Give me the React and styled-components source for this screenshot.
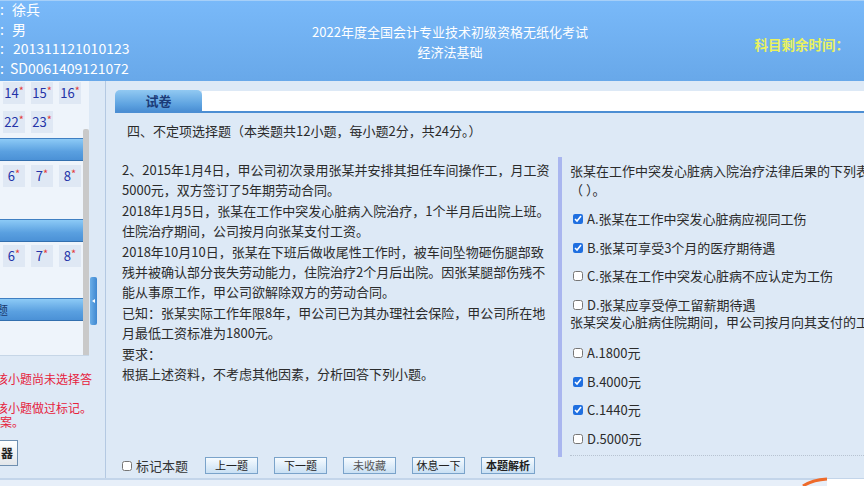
import React from 'react';
import styled, { createGlobalStyle } from 'styled-components';

// Global page reset
const GlobalStyle = createGlobalStyle`
  html, body { margin: 0; padding: 0; }
  body {
    font-family: "Noto Sans CJK SC", "Noto Sans", sans-serif;
    background: #dde9f6;
    overflow: hidden;
  }
  * { box-sizing: border-box; }
`;

const Page = styled.div`
  width: 864px;
  height: 486px;
  display: flex;
  flex-direction: column;
  overflow: hidden;
  position: relative;
`;

/* ---------- header ---------- */
const Header = styled.header`
  height: 81px;
  flex: none;
  display: flex;
  background: linear-gradient(#79b9f9, #68a8e9);
  border-top: 1px solid #a6cff8;
  color: #fff;
`;

const Info = styled.div`
  width: 148px;
  flex: none;
  font-size: 14px;
  line-height: 19.7px;
  margin-top: -1px;
`;

const InfoRow = styled.div`
  display: flex;
  gap: ${p => p.gap}px;
  white-space: nowrap;
`;

const Title = styled.div`
  flex: 1;
  text-align: center;
  font-size: 13px;
  line-height: 20px;
  padding-top: 21px;
`;

const Timer = styled.div`
  width: 112px;
  flex: none;
  display: flex;
  justify-content: flex-end;
  padding: 33px 15px 0 0;
  font-size: 13.5px;
  font-weight: bold;
  color: #eaf25e;
  white-space: nowrap;
`;

/* ---------- body ---------- */
const Body = styled.div`
  height: 399px;
  flex: none;
  display: flex;
  background: #dde9f6;
  border-bottom: 2px solid #c3d5ea;
`;

const Footer = styled.div`
  flex: 1;
  background: #e7eff9;
`;

/* ---------- sidebar ---------- */
const Sidebar = styled.aside`
  width: 106px;
  flex: none;
  border-right: 1px solid #b4c9e2;
  display: flex;
  flex-direction: column;
  overflow: hidden;
`;

const PanelRow = styled.div`
  height: 275px;
  flex: none;
  display: flex;
`;

const Panel = styled.div`
  width: 83px;
  flex: none;
  background: #eef4fb;
  border-bottom: 1px solid #c6d6e7;
  padding-top: 1px;
  overflow: hidden;
`;

const Track = styled.div`
  width: 6px;
  flex: none;
  background: #eef4fb;
  border-bottom: 1px solid #c6d6e7;
  padding-top: 48px;
  display: flex;
`;

const Thumb = styled.div`
  flex: 1;
  background: #c9c9c9;
  border-radius: 2px 2px 0 0;
`;

const Gutter = styled.div`
  flex: 1;
  padding: 196px 0 0 1px;
`;

const Handle = styled.div`
  width: 7px;
  height: 48px;
  border-radius: 2px;
  background: linear-gradient(90deg, #6aaee8, #3f87d0);
  display: flex;
  align-items: center;
  justify-content: center;
  &::after {
    content: '';
    border-style: solid;
    border-width: 2px 3px 2px 0;
    border-color: transparent #fff transparent transparent;
  }
`;

const NumGrid = styled.div`
  display: grid;
  grid-template-columns: repeat(3, 22px);
  column-gap: 6px;
  row-gap: 7px;
  padding-left: 3px;
  margin-top: ${p => p.top || 0}px;
`;

const Num = styled.div`
  height: 22px;
  background: #dfe8f4;
  color: #2433a8;
  font-size: 13px;
  line-height: 22px;
  text-align: center;
  white-space: nowrap;
  sup {
    color: #e23c3c;
    font-size: 11px;
    vertical-align: 3px;
    line-height: 0;
  }
`;

const Bar = styled.div`
  height: 23px;
  margin-top: ${p => p.top}px;
  background: linear-gradient(#8ccaf6, #5aa0e0 60%, #4b91d6);
  border-top: 1px solid #3f7fc2;
  border-bottom: 1px solid #326fae;
  color: #1b3a6e;
  font-size: 12px;
  line-height: 21px;
  text-indent: -4px;
  white-space: nowrap;
`;

const Note = styled.div`
  color: #e6223d;
  font-size: 12px;
  line-height: 14px;
  white-space: nowrap;
  margin: ${p => p.top}px 0 0 ${p => p.left || 0}px;
`;

const CalcButton = styled.div`
  width: 18px;
  height: 26px;
  margin-top: 11px;
  background: linear-gradient(#ffffff, #e2e6ea);
  border: 1px solid #6f8fb0;
  border-left: none;
  font-size: 12px;
  font-weight: bold;
  line-height: 24px;
  color: #222;
  text-indent: 1px;
`;

/* ---------- main area ---------- */
const Main = styled.main`
  flex: 1;
  min-width: 0;
  display: flex;
  flex-direction: column;
  padding: 9px 0 0 9px;
  overflow: hidden;
`;

const TabStrip = styled.div`
  height: 23px;
  flex: none;
  display: flex;
  border-bottom: 2px solid #4c8ed3;
`;

const Tab = styled.div`
  width: 87px;
  height: 21px;
  border-radius: 5px 5px 0 0;
  background: linear-gradient(#91c9f2, #5da2e0 70%, #4b8fd4);
  color: #1b3b78;
  font-size: 13px;
  font-weight: bold;
  line-height: 21px;
  text-align: center;
`;

const TabFill = styled.div`
  flex: 1;
  margin-top: 1px;
  background: #fff;
`;

const SectionTitle = styled.div`
  margin-top: 9px;
  padding-left: 12px;
  font-size: 13px;
  line-height: 18px;
  color: #2b2b2b;
  white-space: nowrap;
`;

const Content = styled.div`
  margin-top: 17px;
  height: 300px;
  flex: none;
  display: flex;
`;

const Material = styled.div`
  width: 443px;
  flex: none;
  padding: 3px 0 0 7px;
  font-size: 13px;
  line-height: 20.4px;
  color: #2b2b2b;
  white-space: nowrap;
`;

const Questions = styled.div`
  flex: 1;
  min-width: 0;
  border-left: 4px solid #a9b6ef;
  padding: 3.5px 0 0 8px;
  overflow: hidden;
  white-space: nowrap;
  font-size: 13px;
  color: #2b2b2b;
`;

const Stem = styled.div`
  line-height: ${p => p.lh}px;
  margin-top: ${p => p.top || 0}px;
`;

const Option = styled.label`
  display: flex;
  align-items: center;
  height: 16px;
  margin-top: ${p => p.top}px;
  padding-left: 3px;
  line-height: 16px;
`;

const Check = styled.input.attrs({ type: 'checkbox' })`
  width: 10px;
  height: 10px;
  margin: 0 4px 0 0;
  accent-color: #1f6fe0;
`;

const Ghost = styled.div`
  margin-top: 8px;
  width: 300px;
  border-top: 1px dotted #b7c3d1;
`;

const Toolbar = styled.div`
  height: 17px;
  flex: none;
  display: flex;
  align-items: center;
  padding-left: 7px;
`;

const MarkLabel = styled.label`
  display: flex;
  align-items: center;
  font-size: 13px;
  color: #333;
  margin-right: 17px;
`;

const ToolButton = styled.button`
  width: ${p => (p.wide ? 54 : 53)}px;
  height: 17px;
  margin-right: 16px;
  padding: 0;
  border: 1px solid #7aa3ca;
  background: linear-gradient(#f6fbff, #c9e0f4);
  font-family: inherit;
  font-size: 11px;
  font-weight: ${p => (p.bold ? 'bold' : 'normal')};
  color: ${p => (p.muted ? '#555' : '#222')};
  line-height: 15px;
`;

const Corner = styled.svg`
  position: absolute;
  left: 800px;
  top: 477px;
`;

const numbers1 = [14, 15, 16, 22, 23];
const material = [
  '2、2015年1月4日，甲公司初次录用张某并安排其担任车间操作工，月工资',
  '5000元，双方签订了5年期劳动合同。',
  '2018年1月5日，张某在工作中突发心脏病入院治疗，1个半月后出院上班。',
  '住院治疗期间，公司按月向张某支付工资。',
  '2018年10月10日，张某在下班后做收尾性工作时，被车间坠物砸伤腿部致',
  '残并被确认部分丧失劳动能力，住院治疗2个月后出院。因张某腿部伤残不',
  '能从事原工作，甲公司欲解除双方的劳动合同。',
  '已知：张某实际工作年限8年，甲公司已为其办理社会保险，甲公司所在地',
  '月最低工资标准为1800元。',
  '要求：',
  '根据上述资料，不考虑其他因素，分析回答下列小题。',
];

const q1 = [
  ['A.张某在工作中突发心脏病应视同工伤', true],
  ['B.张某可享受3个月的医疗期待遇', true],
  ['C.张某在工作中突发心脏病不应认定为工伤', false],
  ['D.张某应享受停工留薪期待遇', false],
];
const q2 = [
  ['A.1800元', false],
  ['B.4000元', true],
  ['C.1440元', true],
  ['D.5000元', false],
];

const NumRow = ({ items, top }) => (
  <NumGrid top={top}>
    {items.map(n => (
      <Num key={n}>{n}<sup>*</sup></Num>
    ))}
  </NumGrid>
);

const App = () => (
  <Page>
    <GlobalStyle />
    <Header>
      <Info>
        <InfoRow gap={8}><span>:</span><span>徐兵</span></InfoRow>
        <InfoRow gap={8}><span>:</span><span>男</span></InfoRow>
        <InfoRow gap={9}><span>:</span><span>201311121010123</span></InfoRow>
        <InfoRow gap={6}><span>:</span><span>SD0061409121072</span></InfoRow>
      </Info>
      <Title>
        <div>2022年度全国会计专业技术初级资格无纸化考试</div>
        <div>经济法基础</div>
      </Title>
      <Timer>科目剩余时间：</Timer>
    </Header>

    <Body>
      <Sidebar>
        <PanelRow>
          <Panel>
            <NumRow items={numbers1} />
            <Bar top={5} />
            <NumRow items={[6, 7, 8]} top={4} />
            <Bar top={32} />
            <NumRow items={[6, 7, 8]} top={3} />
            <Bar top={31}>题</Bar>
          </Panel>
          <Track><Thumb /></Track>
          <Gutter><Handle /></Gutter>
        </PanelRow>
        <Note top={16} left={-4}>该小题尚未选择答</Note>
        <Note top={15} left={-4}>该小题做过标记。</Note>
        <Note top={0}>案。</Note>
        <CalcButton>器</CalcButton>
      </Sidebar>

      <Main>
        <TabStrip>
          <Tab>试卷</Tab>
          <TabFill />
        </TabStrip>
        <SectionTitle>四、不定项选择题（本类题共12小题，每小题2分，共24分。）</SectionTitle>
        <Content>
          <Material>
            {material.map((line, i) => (
              <div key={i}>{line}</div>
            ))}
          </Material>
          <Questions>
            <Stem lh={19}>张某在工作中突发心脏病入院治疗法律后果的下列表述中，正确的是</Stem>
            <Stem lh={19}>（ ）。</Stem>
            {q1.map(([text, on]) => (
              <Option key={text} top={12.5}>
                <Check defaultChecked={on} />
                {text}
              </Option>
            ))}
            <Stem lh={14} top={2}>张某突发心脏病住院期间，甲公司按月向其支付的工资不得低于（ ）。</Stem>
            {q2.map(([text, on], i) => (
              <Option key={text} top={i === 0 ? 16.5 : 12.5}>
                <Check defaultChecked={on} />
                {text}
              </Option>
            ))}
            <Ghost />
          </Questions>
        </Content>
        <Toolbar>
          <MarkLabel><Check />标记本题</MarkLabel>
          <ToolButton>上一题</ToolButton>
          <ToolButton>下一题</ToolButton>
          <ToolButton muted>未收藏</ToolButton>
          <ToolButton>休息一下</ToolButton>
          <ToolButton wide bold>本题解析</ToolButton>
        </Toolbar>
      </Main>
    </Body>
    <Footer />

    <Corner width="64" height="9" viewBox="0 0 64 9">
      <rect x="27" y="2" width="37" height="7" fill="#ffffff" />
      <path d="M3 9 Q 12 3 27 2" stroke="#ee6a2a" strokeWidth="3" fill="none" />
    </Corner>
  </Page>
);

export default App;
